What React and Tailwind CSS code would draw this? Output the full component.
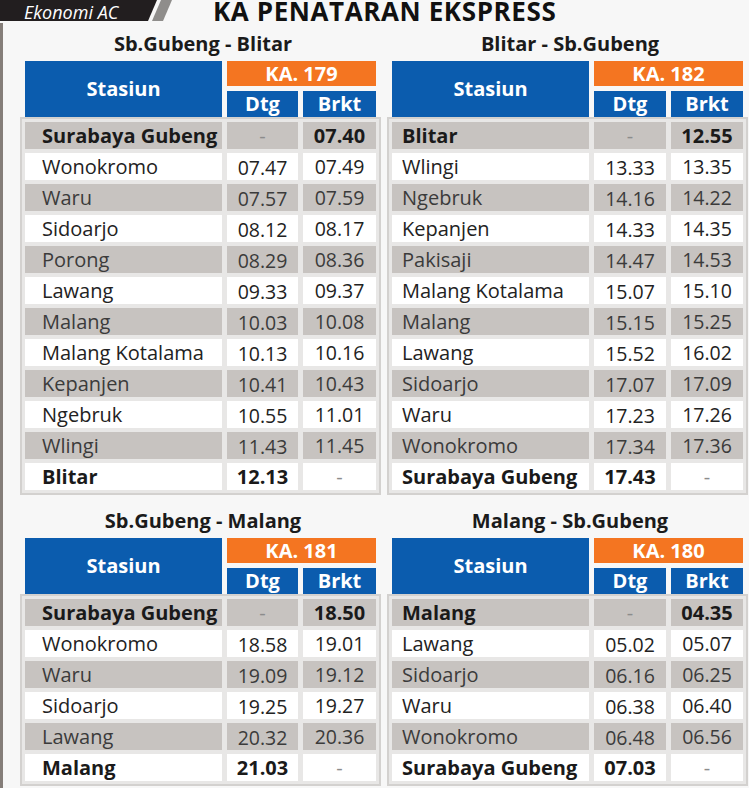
import React from 'react';

const tables = {
  t179: {
    title: 'Sb.Gubeng - Blitar',
    ka: 'KA. 179',
    rows: [
      ['Surabaya Gubeng', '-', '07.40'],
      ['Wonokromo', '07.47', '07.49'],
      ['Waru', '07.57', '07.59'],
      ['Sidoarjo', '08.12', '08.17'],
      ['Porong', '08.29', '08.36'],
      ['Lawang', '09.33', '09.37'],
      ['Malang', '10.03', '10.08'],
      ['Malang Kotalama', '10.13', '10.16'],
      ['Kepanjen', '10.41', '10.43'],
      ['Ngebruk', '10.55', '11.01'],
      ['Wlingi', '11.43', '11.45'],
      ['Blitar', '12.13', '-'],
    ],
  },
  t182: {
    title: 'Blitar - Sb.Gubeng',
    ka: 'KA. 182',
    rows: [
      ['Blitar', '-', '12.55'],
      ['Wlingi', '13.33', '13.35'],
      ['Ngebruk', '14.16', '14.22'],
      ['Kepanjen', '14.33', '14.35'],
      ['Pakisaji', '14.47', '14.53'],
      ['Malang Kotalama', '15.07', '15.10'],
      ['Malang', '15.15', '15.25'],
      ['Lawang', '15.52', '16.02'],
      ['Sidoarjo', '17.07', '17.09'],
      ['Waru', '17.23', '17.26'],
      ['Wonokromo', '17.34', '17.36'],
      ['Surabaya Gubeng', '17.43', '-'],
    ],
  },
  t181: {
    title: 'Sb.Gubeng - Malang',
    ka: 'KA. 181',
    rows: [
      ['Surabaya Gubeng', '-', '18.50'],
      ['Wonokromo', '18.58', '19.01'],
      ['Waru', '19.09', '19.12'],
      ['Sidoarjo', '19.25', '19.27'],
      ['Lawang', '20.32', '20.36'],
      ['Malang', '21.03', '-'],
    ],
  },
  t180: {
    title: 'Malang - Sb.Gubeng',
    ka: 'KA. 180',
    rows: [
      ['Malang', '-', '04.35'],
      ['Lawang', '05.02', '05.07'],
      ['Sidoarjo', '06.16', '06.25'],
      ['Waru', '06.38', '06.40'],
      ['Wonokromo', '06.48', '06.56'],
      ['Surabaya Gubeng', '07.03', '-'],
    ],
  },
};

function Schedule({ data, side }) {
  const left = side === 'left';
  const cols = left ? 'grid-cols-[197px_71px_73px]' : 'grid-cols-[197px_72px_72px]';
  const namePad = left ? 'pl-[17px]' : 'pl-[10px]';
  const last = data.rows.length - 1;

  return (
    <div className="flex flex-col">
      <div className="h-[26px] leading-[26px] mb-[4px] text-center text-[20px] font-bold text-[#1b1b1b] pl-[5px]">
        {data.title}
      </div>

      {/* header */}
      <div className={`grid ${cols} gap-x-[5px] px-[5px]`}>
        <div className="bg-[#0b5cae] text-white font-bold text-[20px] flex items-center justify-center h-[56px]">
          Stasiun
        </div>
        <div className="col-span-2 flex flex-col gap-[5px]">
          <div className="h-[25px] bg-[#f47521] text-white font-bold text-[20px] leading-[25px] text-center">
            {data.ka}
          </div>
          <div className="flex gap-x-[5px]">
            <div className={`h-[26px] bg-[#0b5cae] text-white font-bold text-[20px] leading-[26px] text-center ${left ? 'w-[71px]' : 'w-[72px]'}`}>
              Dtg
            </div>
            <div className={`h-[26px] bg-[#0b5cae] text-white font-bold text-[20px] leading-[26px] text-center ${left ? 'w-[73px]' : 'w-[72px]'}`}>
              Brkt
            </div>
          </div>
        </div>
      </div>

      {/* body */}
      <div className="border-2 border-[#d3d1cf] bg-[#e8e7e6] p-[3px] flex flex-col gap-[4px]">
        {data.rows.map((r, i) => {
          const bold = i === 0 || i === last;
          const grey = i % 2 === 0;
          const bg = grey ? 'bg-[#c7c3c0]' : 'bg-white';
          const txt = bold ? 'font-bold text-[#1a1a1a]' : grey ? 'text-[#3b3b3b]' : 'text-[#222]';
          const dash = 'text-[#8c8c8c]';
          return (
            <div key={i} className={`grid ${cols} gap-x-[5px] h-[27px]`}>
              <div className={`${bg} ${txt} ${namePad} text-[20px] leading-[27px] whitespace-nowrap`}>{r[0]}</div>
              <div
                className={`${bg} ${r[1] === '-' ? dash : txt} text-center whitespace-nowrap ${
                  bold ? 'text-[20px] leading-[27px]' : 'text-[19.5px] leading-[24px] pt-[3px]'
                }`}
              >
                {r[1]}
              </div>
              <div className={`${bg} ${r[2] === '-' ? dash : txt} text-center leading-[27px] whitespace-nowrap ${bold ? 'text-[20px]' : 'text-[19.5px]'}`}>
                {r[2]}
              </div>
            </div>
          );
        })}
      </div>
    </div>
  );
}

export default function App() {
  return (
    <div className="w-[749px] h-[788px] overflow-hidden bg-[#f7f7f7] font-['Open_Sans',sans-serif]">
      {/* top banner */}
      <div className="flex items-start h-[23px]">
        <div className="relative w-[175px] h-[21px] shrink-0">
          <svg width="175" height="21" viewBox="0 0 175 21" className="absolute inset-0">
            <polygon points="0,0 157,0 148,21 0,21" fill="#221e1f" />
            <polygon points="161,0 172,0 163,21 152,21" fill="#8f8d8b" />
          </svg>
          <span className="absolute left-[24px] top-0 leading-[24px] text-[18px] italic text-white whitespace-nowrap">
            Ekonomi AC
          </span>
        </div>
        <div className="ml-[38px] text-[26px] leading-[23px] font-bold tracking-[0.6px] text-[#111] whitespace-nowrap">
          KA PENATARAN EKSPRESS
        </div>
      </div>

      <div className="border-l-[3px] border-[#857e79] h-[765px] pl-[17px] pt-[8px]">
        <div className="flex gap-[6px]">
          <Schedule data={tables.t179} side="left" />
          <Schedule data={tables.t182} side="right" />
        </div>
        <div className="flex gap-[6px] mt-[13px]">
          <Schedule data={tables.t181} side="left" />
          <Schedule data={tables.t180} side="right" />
        </div>
      </div>
    </div>
  );
}
